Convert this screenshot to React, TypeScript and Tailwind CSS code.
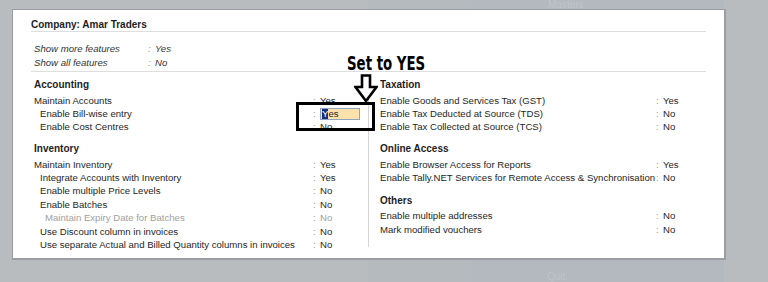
import React from 'react';

interface Row {
  label: string;
  value: string;
  level?: number;
  muted?: boolean;
  active?: boolean;
}

interface Section {
  title: string;
  rows: Row[];
}

const leftSections: Section[] = [
  {
    title: 'Accounting',
    rows: [
      { label: 'Maintain Accounts', value: 'Yes' },
      { label: 'Enable Bill-wise entry', value: 'Yes', level: 1, active: true },
      { label: 'Enable Cost Centres', value: 'No', level: 1 },
    ],
  },
  {
    title: 'Inventory',
    rows: [
      { label: 'Maintain Inventory', value: 'Yes' },
      { label: 'Integrate Accounts with Inventory', value: 'Yes', level: 1 },
      { label: 'Enable multiple Price Levels', value: 'No', level: 1 },
      { label: 'Enable Batches', value: 'No', level: 1 },
      { label: 'Maintain Expiry Date for Batches', value: 'No', level: 2, muted: true },
      { label: 'Use Discount column in invoices', value: 'No', level: 1 },
      { label: 'Use separate Actual and Billed Quantity columns in invoices', value: 'No', level: 1 },
    ],
  },
];

const rightSections: Section[] = [
  {
    title: 'Taxation',
    rows: [
      { label: 'Enable Goods and Services Tax (GST)', value: 'Yes' },
      { label: 'Enable Tax Deducted at Source (TDS)', value: 'No' },
      { label: 'Enable Tax Collected at Source (TCS)', value: 'No' },
    ],
  },
  {
    title: 'Online Access',
    rows: [
      { label: 'Enable Browser Access for Reports', value: 'Yes' },
      { label: 'Enable Tally.NET Services for Remote Access & Synchronisation', value: 'No' },
    ],
  },
  {
    title: 'Others',
    rows: [
      { label: 'Enable multiple addresses', value: 'No' },
      { label: 'Mark modified vouchers', value: 'No' },
    ],
  },
];

const indent = ['pl-0', 'pl-[6px]', 'pl-[11px]'];

const FeatureRow: React.FC<{ row: Row; valueWidth: string }> = ({ row, valueWidth }) => (
  <div className={`flex h-[13.4px] items-center ${row.muted ? 'text-[#a0a0a0]' : 'text-[#262626]'}`}>
    <div className={`flex-1 whitespace-nowrap ${indent[row.level ?? 0]}`}>{row.label}</div>
    <div className={`flex shrink-0 items-center ${valueWidth}`}>
      <span className="w-[7px] text-[#9a9a9a]">:</span>
      {row.active ? (
        <span className="flex h-[12px] w-[40px] items-center border border-[#8fa3c2] bg-[#fde3ab] pl-[1px] leading-[10px]">
          <span className="bg-[#1d2c78] text-white">Y</span>
          <span>es</span>
        </span>
      ) : (
        <span>{row.value}</span>
      )}
    </div>
  </div>
);

const SectionBlock: React.FC<{ section: Section; valueWidth: string; className?: string }> = ({
  section,
  valueWidth,
  className = '',
}) => (
  <div className={className}>
    <div className="mb-[2px] text-[10px] leading-[14px] font-bold text-[#1e1e1e]">{section.title}</div>
    {section.rows.map((row) => (
      <FeatureRow key={row.label} row={row} valueWidth={valueWidth} />
    ))}
  </div>
);

export default function App() {
  return (
    <div className="relative h-[282px] w-[768px] overflow-hidden font-['Liberation_Sans',Arial,sans-serif] text-[9.6px]">
      {/* Tally screen behind the dialog */}
      <div className="flex h-full">
        <div className="w-[368px] bg-[#b8bcbf]" />
        <div className="w-[104px] bg-[#b5babe]" />
        <div className="flex w-[252px] flex-col justify-between bg-[#b4b9bf] text-[10px] text-[#bfc4ca]">
          <span className="pl-[76px] leading-[10px]">Masters</span>
          <span className="pl-[75px] leading-[10px]">Quit</span>
        </div>
        <div className="flex-1 bg-[#b8bcbf]" />
      </div>

      {/* Features dialog */}
      <div className="absolute left-[12px] top-[9px] h-[251px] w-[714px] border border-r-2 border-b-2 border-[#9a9ea3] bg-white px-[18px]">
        <div className="h-[22px] border-b border-[#dedede] pt-[8px] text-[10px] leading-[13px] font-bold text-[#1e1e1e]">
          Company: Amar Traders
        </div>

        <div className="border-b border-[#dedede] pt-[10px] pb-[1px] pl-[3px] italic text-[#333]">
          <div className="flex h-[14px] items-center">
            <span className="w-[114px]">Show more features</span>
            <span className="w-[7px] text-[#9a9a9a]">:</span>
            <span>Yes</span>
          </div>
          <div className="flex h-[14px] items-center">
            <span className="w-[114px]">Show all features</span>
            <span className="w-[7px] text-[#9a9a9a]">:</span>
            <span>No</span>
          </div>
        </div>

        <div className="flex">
          <div className="w-[337px] pt-[6px] pl-[3px]">
            <SectionBlock section={leftSections[0]} valueWidth="w-[55px]" />
            <SectionBlock section={leftSections[1]} valueWidth="w-[55px]" className="mt-[8px]" />
          </div>
          <div className="mt-[6px] mb-[5px] flex-1 border-l border-[#d4d4d4] pl-[11px]">
            <div>
              <SectionBlock section={rightSections[0]} valueWidth="w-[50px]" />
              <SectionBlock section={rightSections[1]} valueWidth="w-[50px]" className="mt-[8px]" />
              <SectionBlock section={rightSections[2]} valueWidth="w-[50px]" className="mt-[9px]" />
            </div>
          </div>
        </div>
      </div>

      {/* Annotation */}
      <div className="absolute left-[347px] top-[54px] origin-left scale-x-[0.78] whitespace-nowrap font-['DejaVu_Sans_Condensed','DejaVu_Sans',sans-serif] text-[19px] leading-[19px] font-bold text-black">
        Set to YES
      </div>
      <svg className="absolute left-[354px] top-[74px]" width="24" height="29" viewBox="0 0 24 29">
        <path
          d="M8 1.5 H16 V13 H22.5 L12 27 L1.5 13 H8 Z"
          fill="white"
          stroke="black"
          strokeWidth="2.6"
          strokeLinejoin="miter"
        />
      </svg>
      <div className="absolute left-[296px] top-[102px] h-[29px] w-[79px] border-[3px] border-black" />
    </div>
  );
}
